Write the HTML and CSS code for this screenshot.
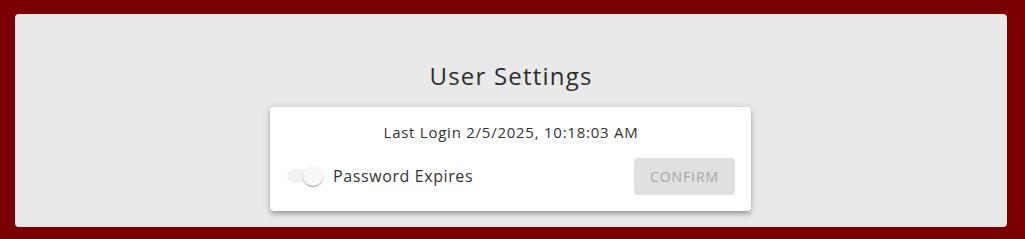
FILE: index.html
```html
<!DOCTYPE html>
<html lang="en">
<head>
    <meta charset="UTF-8">
    <title>User Settings</title>
    <link rel="stylesheet" href="styles.css">
</head>
<body>
    <div class="panel">
        <h1 class="title">User Settings</h1>
        <div class="card">
            <p class="last-login">Last Login 2/5/2025, 10:18:03 AM</p>
            <div class="card-row">
                <label class="switch">
                    <input type="checkbox" checked disabled>
                    <span class="track"></span>
                    <span class="thumb"></span>
                </label>
                <span class="switch-label">Password Expires</span>
                <button class="confirm" disabled>Confirm</button>
            </div>
        </div>
    </div>
</body>
</html>
```

FILE: styles.css
```css
* {
    margin: 0;
    padding: 0;
    box-sizing: border-box;
}

html, body {
    height: 100%;
}

body {
    background-color: #7b0000;
    font-family: 'Open Sans', 'Liberation Sans', sans-serif;
    color: #333;
    padding: 14px 18px 12px 15px;
}

.panel {
    background-color: #e9e9e9;
    border-radius: 4px;
    height: 213px;
    display: flex;
    flex-direction: column;
    align-items: center;
    padding-top: 46px;
}

.title {
    font-weight: 400;
    font-size: 24px;
    line-height: 32px;
    letter-spacing: 1.2px;
    color: #2e2e2e;
    margin-bottom: 15px;
}

.card {
    background-color: white;
    width: 481px;
    height: 104px;
    margin-right: 1px;
    border-radius: 4px;
    box-shadow: 0 2px 4px -1px rgba(0, 0, 0, 0.2), 0 4px 5px 0 rgba(0, 0, 0, 0.14), 0 1px 10px 0 rgba(0, 0, 0, 0.12);
    padding: 14px 16px 0 17px;
}

.last-login {
    text-align: center;
    font-size: 15px;
    line-height: 22px;
    letter-spacing: 0.75px;
    color: #333;
}

.card-row {
    display: flex;
    align-items: center;
    margin-top: 14px;
}

.switch {
    position: relative;
    width: 36px;
    height: 38px;
    display: flex;
    align-items: center;
    margin-right: 10px;
}

.switch input {
    display: none;
}

.track {
    width: 34px;
    height: 14px;
    border-radius: 7px;
    background-color: #f2f2f2;
}

.thumb {
    position: absolute;
    left: 16px;
    top: 9px;
    width: 20px;
    height: 20px;
    border-radius: 50%;
    background-color: #f8f8f8;
    box-shadow: 0 2px 1px -1px rgba(0, 0, 0, 0.2), 0 1px 1px 0 rgba(0, 0, 0, 0.14), 0 1px 3px 0 rgba(0, 0, 0, 0.12);
}

.switch-label {
    font-size: 16px;
    letter-spacing: 0.6px;
    color: #333;
    flex-grow: 1;
}

.confirm {
    width: 101px;
    height: 37px;
    border: none;
    border-radius: 4px;
    background-color: #e0e0e0;
    color: #a6a6a6;
    font-family: inherit;
    font-size: 14px;
    text-transform: uppercase;
    letter-spacing: 0.9px;
}
```
